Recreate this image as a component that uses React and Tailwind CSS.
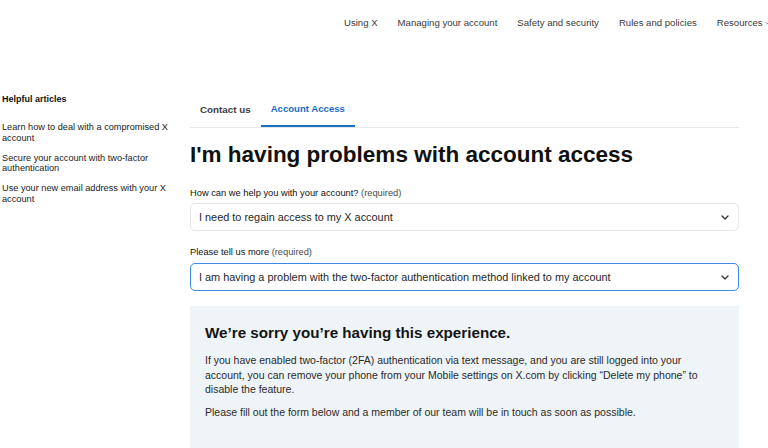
import React from 'react';

const navItems = ['Using X', 'Managing your account', 'Safety and security', 'Rules and policies'];

const articles = [
  'Learn how to deal with a compromised X account',
  'Secure your account with two-factor authentication',
  'Use your new email address with your X account',
];

const Chevron = () => (
  <svg width="8" height="5" viewBox="0 0 8 5" fill="none" className="shrink-0">
    <path d="M1 1l3 3 3-3" stroke="#333" strokeWidth="1.3" strokeLinecap="round" strokeLinejoin="round" />
  </svg>
);

const Select = ({ value, focused }) => (
  <div
    className={`flex items-center justify-between rounded-[5px] bg-white pl-[8px] pr-[9px] h-[28px] ${
      focused ? 'border-[1.5px] border-[#3d8ae5]' : 'border border-[#e3e6ea]'
    }`}
  >
    <span className="text-[10.9px] leading-[13px] text-[#1f1f1f] whitespace-nowrap">{value}</span>
    <Chevron />
  </div>
);

export default function App() {
  return (
    <div className="w-[768px] h-[448px] overflow-hidden bg-white font-['Liberation_Sans',Arial,sans-serif] text-[#1f1f1f]">
      {/* top nav */}
      <header className="flex items-center h-[45px] pl-[344px] gap-[20px] text-[9.6px] leading-[12px] text-[#3a3a3a]">
        {navItems.map((item) => (
          <span key={item} className="whitespace-nowrap">{item}</span>
        ))}
        <span className="flex items-center gap-[2px] whitespace-nowrap">
          Resources
          <svg width="5" height="4" viewBox="0 0 6 4" fill="none">
            <path d="M1 1l2 2 2-2" stroke="#666" strokeWidth="0.9" />
          </svg>
        </span>
      </header>

      <div className="flex pt-[48px]">
        {/* sidebar */}
        <aside className="w-[190px] pl-[2px] pr-[14px]">
          <h4 className="text-[9px] leading-[12px] font-bold text-[#111]">Helpful articles</h4>
          <ul className="mt-[17px] space-y-[9.5px]">
            {articles.map((a) => (
              <li key={a} className="text-[9.2px] leading-[10.5px] text-[#222]">{a}</li>
            ))}
          </ul>
        </aside>

        {/* main */}
        <main className="w-[549px] pt-[1px]">
          <div className="flex border-b border-[#e6e8eb]">
            <div className="h-[33px] px-[10px] flex items-center text-[9.8px] font-bold text-[#3c3c3c]">Contact us</div>
            <div className="h-[33px] px-[10px] flex items-center text-[9.6px] font-bold text-[#1a6dc6] border-b-2 border-[#1a6dc6] -mb-px">
              Account Access
            </div>
          </div>

          <h1 className="mt-[13px] text-[22.5px] leading-[28px] font-bold text-[#111] whitespace-nowrap">
            I'm having problems with account access
          </h1>

          <label className="block mt-[18px] text-[9.3px] leading-[12px] text-[#111]">
            How can we help you with your account? <span className="text-[#4a4a4a]">(required)</span>
          </label>
          <div className="mt-[4px]">
            <Select value="I need to regain access to my X account" />
          </div>

          <label className="block mt-[15px] text-[9.3px] leading-[12px] text-[#111]">
            Please tell us more <span className="text-[#4a4a4a]">(required)</span>
          </label>
          <div className="mt-[5px]">
            <Select focused value="I am having a problem with the two-factor authentication method linked to my account" />
          </div>

          <section className="mt-[15px] h-[160px] bg-[#eff4f8] pl-[15px] pr-[16px] pt-[18px]">
            <h2 className="text-[15.2px] leading-[18px] font-bold text-[#141414] whitespace-nowrap">
              We’re sorry you’re having this experience.
            </h2>
            <p className="mt-[11px] text-[10.5px] leading-[14.7px] text-[#2a2a2a]">
              If you have enabled two-factor (2FA) authentication via text message, and you are still logged into your
              account, you can remove your phone from your Mobile settings on X.com by clicking “Delete my phone” to
              disable the feature.
            </p>
            <p className="mt-[7.5px] text-[10.5px] leading-[14.7px] text-[#2a2a2a]">
              Please fill out the form below and a member of our team will be in touch as soon as possible.
            </p>
          </section>
        </main>
      </div>
    </div>
  );
}
